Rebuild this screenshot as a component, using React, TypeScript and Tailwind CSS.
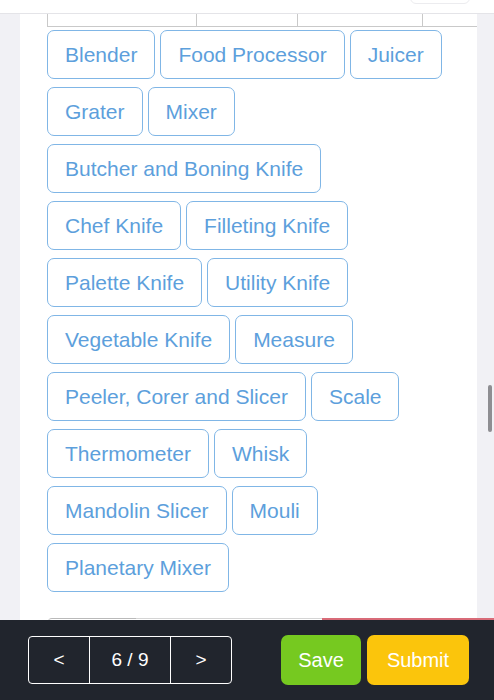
const tags: string[][] = [
  ["Blender", "Food Processor", "Juicer"],
  ["Grater", "Mixer"],
  ["Butcher and Boning Knife"],
  ["Chef Knife", "Filleting Knife"],
  ["Palette Knife", "Utility Knife"],
  ["Vegetable Knife", "Measure"],
  ["Peeler, Corer and Slicer", "Scale"],
  ["Thermometer", "Whisk"],
  ["Mandolin Slicer", "Mouli"],
  ["Planetary Mixer"],
];

export default function App() {
  return (
    <div
      className="relative w-[494px] h-[700px] overflow-hidden bg-[#f1f1f5]"
      style={{ fontFamily: '"Liberation Sans", Arial, sans-serif' }}
    >
      {/* top bar */}
      <div className="relative h-[14px] bg-white border-b border-[#e4e4e8]">
        <div className="absolute right-[24px] -top-[10px] w-[60px] h-[14px] rounded-[6px] border border-[#ececef] bg-white" />
      </div>

      <div className="flex">
        <div className="w-[20px] shrink-0" />
        <div className="w-[457px] bg-white pl-[27px] h-[606px]">
          {/* table bottom */}
          <div className="flex h-[13px] border-b border-[#c9c9c9]">
            <div className="w-[150px] border-l border-r border-[#c9c9c9]" />
            <div className="w-[101px] border-r border-[#c9c9c9]" />
            <div className="w-[125px] border-r border-[#c9c9c9]" />
          </div>

          <div className="flex flex-col gap-y-[8px] pt-[3px]">
            {tags.map((row, i) => (
              <div key={i} className="flex gap-x-[5px]">
                {row.map((t) => (
                  <div
                    key={t}
                    className="h-[49px] flex items-center px-[17px] border-[1.5px] border-[#80b6e6] rounded-[7px] text-[21px] text-[#5d9fdc] bg-white"
                  >
                    {t}
                  </div>
                ))}
              </div>
            ))}
          </div>

          <div className="flex mt-[26px] ml-[1px]">
            <div className="w-[88px] h-[4px] border-t border-[#b9b9b9] rounded-tl-[4px]" />
            <div className="w-[186px] h-[4px] border-t border-[#d4d4d4]" />
            <div className="w-[172px] h-[4px] border-t-2 border-[#d86b78] -mr-[20px]" />
          </div>
        </div>
        <div className="flex-1 relative">
          <div className="absolute left-[11px] top-[371px] w-[4px] h-[47px] rounded-full bg-[#8e8e92]" />
        </div>
      </div>

      {/* footer */}
      <div className="absolute left-0 right-0 bottom-0 h-[80px] bg-[#21252d] flex items-center pl-[28px] pr-[25px]">
        <div className="flex h-[48px] border border-white rounded-[4px] text-white text-[19px]">
          <div className="w-[61px] flex items-center justify-center border-r border-white">&lt;</div>
          <div className="w-[81px] flex items-center justify-center border-r border-white">6 / 9</div>
          <div className="w-[60px] flex items-center justify-center">&gt;</div>
        </div>
        <div className="flex-1" />
        <div className="flex gap-[6px]">
          <div className="w-[80px] h-[50px] rounded-[7px] bg-[#76c920] text-white text-[20px] flex items-center justify-center">
            Save
          </div>
          <div className="w-[102px] h-[50px] rounded-[7px] bg-[#fbc50c] text-white text-[20px] flex items-center justify-center">
            Submit
          </div>
        </div>
      </div>
    </div>
  );
}
